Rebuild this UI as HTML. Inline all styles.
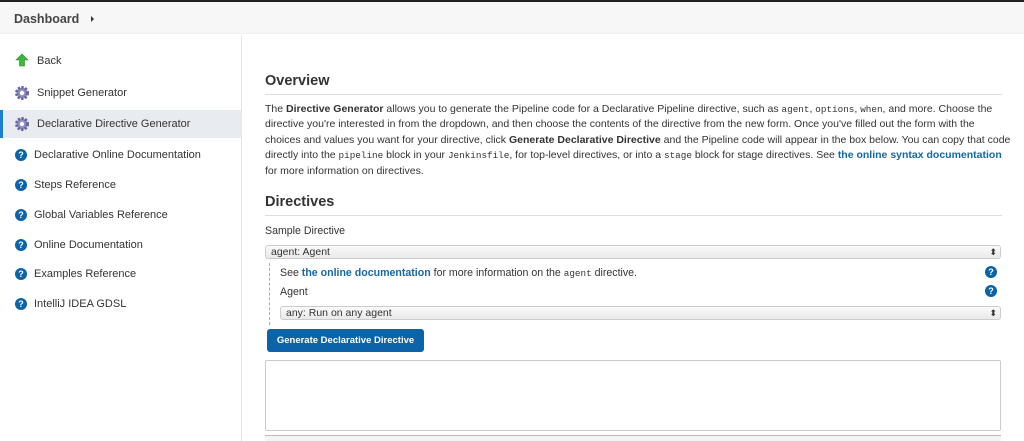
<!DOCTYPE html>
<html><head><style>
*{box-sizing:border-box;margin:0;padding:0}
body{width:1024px;height:441px;overflow:hidden;background:#fff;font-family:"Liberation Sans",sans-serif;color:#333;font-size:11px;position:relative}
.top{position:absolute;left:0;top:0;width:1024px;height:2px;background:#222}
.hdr{position:absolute;left:0;top:2px;width:1024px;height:32px;background:#f7f7f7;border-bottom:1px solid #eee}
.hdr span{position:absolute;left:14px;top:10px;font-size:12.5px;font-weight:bold;color:#444}
.hdr i{position:absolute;left:91px;top:14px;width:0;height:0;border-left:3px solid #333;border-top:3px solid transparent;border-bottom:3px solid transparent}
.side{position:absolute;left:0;top:35px;width:242px;height:406px;border-right:1px solid #e6e6e6}
.it{position:absolute;left:0;width:241px;height:28px;font-size:11px;color:#333}
.it .t{position:absolute;left:34px;top:8px}
.it.sel{background:#e8ecf0;border-left:3px solid #1b7fd0}
.q{position:absolute;left:15px;top:8px;width:12px;height:12px;border-radius:50%;background:#0b63a8;color:#fff;font-size:9px;font-weight:bold;text-align:center;line-height:12px}
.main{position:absolute;left:265px;top:0;width:737px}
h2{position:absolute;font-size:14.5px;font-weight:bold;color:#333;left:0;width:737px;border-bottom:1px solid #ddd;padding-bottom:5px}
p{position:absolute;left:0;top:102px;width:760px;line-height:15.4px;font-size:10.5px;white-space:nowrap}
code{font-family:"Liberation Mono",monospace;font-size:9.3px}
a{color:#1468a8;font-weight:bold;text-decoration:none}
.sel2{position:absolute;height:14px;border:1px solid #ccc;border-radius:3px;background:linear-gradient(#fafafa,#e9e9e9);font-size:10.5px;padding-left:5px;line-height:12px}
.sel2:after{content:"⬍";position:absolute;right:3px;top:0;font-size:9px}
.qh{position:absolute;width:12px;height:12px;border-radius:50%;background:#0b63a8;color:#fff;font-size:9px;font-weight:bold;text-align:center;line-height:12px}
</style></head><body>
<div class="top"></div>
<div class="hdr"><span>Dashboard</span><i></i></div>
<div class="side">
<div class="it" style="top:12px"><svg style="position:absolute;left:15px;top:6px" width="14" height="14" viewBox="0 0 14 14"><path d="M7 1L13 7H9.5V13H4.5V7H1Z" fill="#3cb83c" stroke="#2a8a2a" stroke-width=".6"/></svg><span class="t" style="left:37px">Back</span></div>
<div class="it" style="top:44px"><svg style="position:absolute;left:14px;top:6px" width="16" height="16" viewBox="0 0 16 16"><circle cx="8" cy="8" r="5.5" fill="#8e8ec0" stroke="#66669a" stroke-dasharray="2.2 1.4" stroke-width="3"/><circle cx="8" cy="8" r="2.2" fill="#fff"/></svg><span class="t" style="left:37px">Snippet Generator</span></div>
<div class="it sel" style="top:75px"><svg style="position:absolute;left:11px;top:6px" width="16" height="16" viewBox="0 0 16 16"><circle cx="8" cy="8" r="5.5" fill="#8e8ec0" stroke="#66669a" stroke-dasharray="2.2 1.4" stroke-width="3"/><circle cx="8" cy="8" r="2.2" fill="#fff"/></svg><span class="t" style="left:34px">Declarative Directive Generator</span></div>
<div class="it" style="top:106px"><div class="q">?</div><span class="t">Declarative Online Documentation</span></div>
<div class="it" style="top:136px"><div class="q">?</div><span class="t">Steps Reference</span></div>
<div class="it" style="top:166px"><div class="q">?</div><span class="t">Global Variables Reference</span></div>
<div class="it" style="top:196px"><div class="q">?</div><span class="t">Online Documentation</span></div>
<div class="it" style="top:225px"><div class="q">?</div><span class="t">Examples Reference</span></div>
<div class="it" style="top:255px"><div class="q">?</div><span class="t">IntelliJ IDEA GDSL</span></div>
</div>
<div class="main">
<h2 style="top:73px">Overview</h2>
<p>The <b>Directive Generator</b> allows you to generate the Pipeline code for a Declarative Pipeline directive, such as <code>agent</code>, <code>options</code>, <code>when</code>, and more. Choose the<br>directive you're interested in from the dropdown, and then choose the contents of the directive from the new form. Once you've filled out the form with the<br>choices and values you want for your directive, click <b>Generate Declarative Directive</b> and the Pipeline code will appear in the box below. You can copy that code<br>directly into the <code>pipeline</code> block in your <code>Jenkinsfile</code>, for top-level directives, or into a <code>stage</code> block for stage directives. See <a>the online syntax documentation</a><br>for more information on directives.</p>
<h2 style="top:194px">Directives</h2>
<div style="position:absolute;top:225px;left:0;font-size:10.6px">Sample Directive</div>
<div class="sel2" style="top:245px;left:0;width:736px">agent: Agent</div>
<div style="position:absolute;left:4px;top:263px;height:62px;border-left:1px dashed #aaa"></div>
<div style="position:absolute;top:267px;left:15px;font-size:10.6px">See <a>the online documentation</a> for more information on the <code>agent</code> directive.</div>
<div class="qh" style="left:720px;top:266px">?</div>
<div style="position:absolute;top:286px;left:15px;font-size:10.6px">Agent</div>
<div class="qh" style="left:720px;top:285px">?</div>
<div class="sel2" style="top:306px;left:15px;width:721px">any: Run on any agent</div>
<div style="position:absolute;top:329px;left:2px;width:157px;height:23px;background:#0b63a8;border-radius:3px;color:#fff;font-size:9.5px;font-weight:bold;text-align:center;line-height:23px">Generate Declarative Directive</div>
<div style="position:absolute;top:360px;left:0;width:736px;height:71px;border:1px solid #ccc;border-radius:2px"></div>
<div style="position:absolute;top:435px;left:0;width:736px;height:6px;border-top:1px solid #bbb;background:#f4f4f4"></div>
</div>
</body></html>
